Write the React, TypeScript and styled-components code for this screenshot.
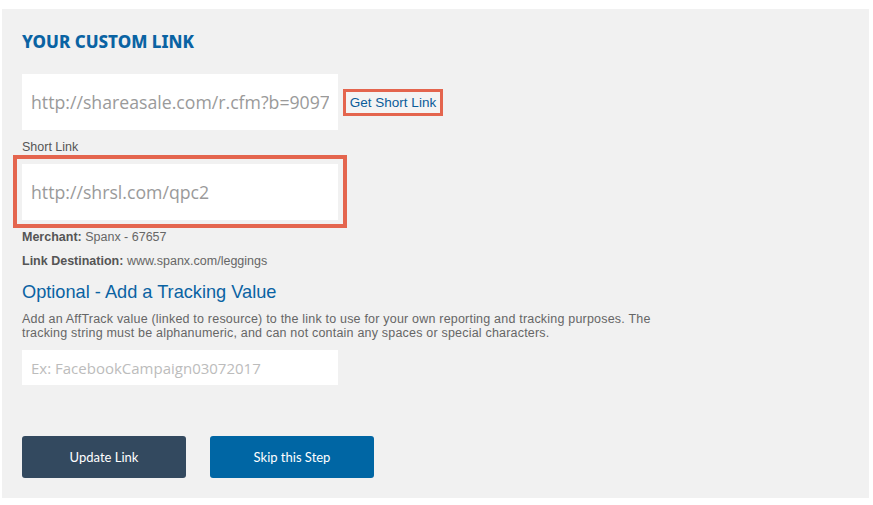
import styled, { createGlobalStyle } from 'styled-components'

const GlobalStyle = createGlobalStyle`
  html, body {
    margin: 0;
    padding: 0;
    background: #ffffff;
  }
  body {
    font-family: 'Liberation Sans', Arial, sans-serif;
  }
`

export default function App() {
  return (
    <>
      <GlobalStyle />
      <Panel>
        <Title>Your Custom Link</Title>

        <LinkRow>
          <TextField $height={56} $size={17.7} readOnly value="http://shareasale.com/r.cfm?b=909772&u=1234&m=67657&urllink=www.spanx.com/leggings" />
          <Highlight $thin>
            <ShortLinkButton type="button">Get Short Link</ShortLinkButton>
          </Highlight>
        </LinkRow>

        <Label>Short Link</Label>
        <Highlight>
          <TextField $height={56} $size={17.7} readOnly value="http://shrsl.com/qpc2" />
        </Highlight>

        <Meta>
          <strong>Merchant:</strong> Spanx - 67657
        </Meta>
        <Meta $spaced>
          <strong>Link Destination:</strong> www.spanx.com/leggings
        </Meta>

        <Subtitle>Optional - Add a Tracking Value</Subtitle>
        <HelpText>
          Add an AffTrack value (linked to resource) to the link to use for your own reporting and tracking purposes. The
          <br />
          tracking string must be alphanumeric, and can not contain any spaces or special characters.
        </HelpText>
        <TextField $height={35} $size={15} placeholder="Ex: FacebookCampaign03072017" />

        <Actions>
          <ActionButton type="button" $variant="dark">Update Link</ActionButton>
          <ActionButton type="button">Skip this Step</ActionButton>
        </Actions>
      </Panel>
    </>
  )
}

const Panel = styled.main`
  box-sizing: border-box;
  width: 867px;
  height: 489px;
  margin: 9px 0 0 2px;
  padding: 23px 20px 20px;
  background: #f1f1f1;
  display: flex;
  flex-direction: column;
  align-items: flex-start;
`

const Title = styled.h2`
  margin: 0 0 22px;
  font-family: 'Noto Sans', 'Liberation Sans', sans-serif;
  font-size: 17px;
  line-height: 20px;
  font-weight: 800;
  text-transform: uppercase;
  color: #0a63a3;
`

const LinkRow = styled.div`
  display: flex;
  align-items: center;
  gap: 5px;
`

const TextField = styled.input<{ $height: number; $size: number }>`
  box-sizing: border-box;
  width: 316px;
  height: ${({ $height }) => $height}px;
  padding: 0 9px;
  border: none;
  outline: none;
  background: #ffffff;
  font-family: 'Open Sans', 'Liberation Sans', sans-serif;
  font-size: ${({ $size }) => $size}px;
  color: #9a9a9a;
  &::placeholder {
    color: #bcbcbc;
  }
`

const Highlight = styled.div<{ $thin?: boolean }>`
  display: flex;
  border: ${({ $thin }) => ($thin ? 3 : 4)}px solid #e4654e;
  padding: ${({ $thin }) => ($thin ? '0' : '5px 5px 4px')};
  margin-left: ${({ $thin }) => ($thin ? 0 : -9)}px;
`

const ShortLinkButton = styled.button`
  box-sizing: border-box;
  width: 94px;
  height: 21px;
  padding: 0;
  border: none;
  background: #f4f4f4;
  font-family: 'Liberation Sans', Arial, sans-serif;
  font-size: 13.5px;
  color: #0a5c99;
  cursor: pointer;
`

const Label = styled.div`
  margin-top: 9px;
  font-size: 12.5px;
  line-height: 16px;
  color: #555555;
`

const Meta = styled.div<{ $spaced?: boolean }>`
  margin-top: ${({ $spaced }) => ($spaced ? 8 : 1)}px;
  font-size: 12.5px;
  line-height: 16px;
  color: #666666;
  strong {
    font-weight: 700;
    color: #555555;
  }
`

const Subtitle = styled.h3`
  margin: 13px 0 0;
  font-family: 'Liberation Sans', Arial, sans-serif;
  font-weight: 400;
  font-size: 18.2px;
  line-height: 20px;
  color: #0a63a3;
`

const HelpText = styled.p`
  width: 680px;
  margin: 10px 0 10px;
  font-size: 12.5px;
  line-height: 14px;
  letter-spacing: 0.2px;
  color: #666666;
`

const Actions = styled.div`
  display: flex;
  gap: 24px;
  margin-top: 51px;
`

const ActionButton = styled.button<{ $variant?: 'dark' }>`
  width: 164px;
  height: 42px;
  border: none;
  border-radius: 3px;
  background: ${({ $variant }) => ($variant === 'dark' ? '#33495f' : '#0066a4')};
  color: #ffffff;
  font-family: 'Lato', 'Liberation Sans', sans-serif;
  font-size: 13px;
  cursor: pointer;
`
